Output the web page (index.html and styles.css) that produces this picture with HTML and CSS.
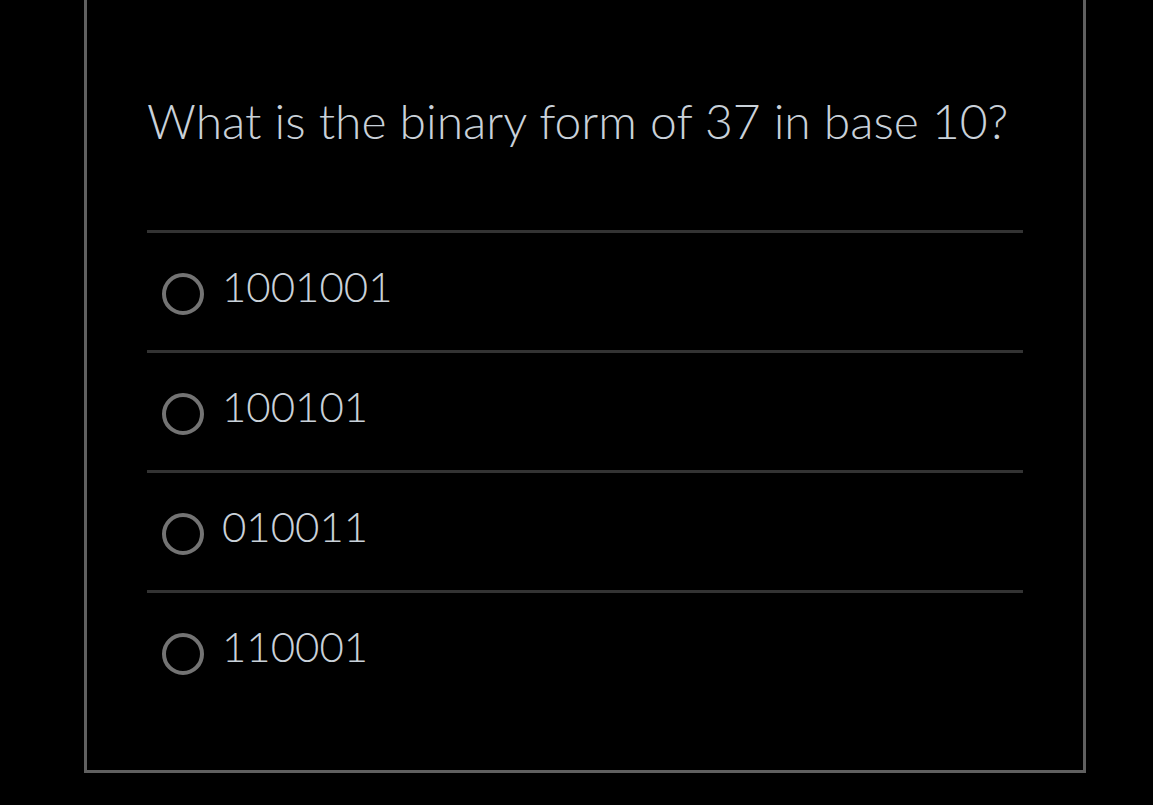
FILE: index.html
```html
<!DOCTYPE html>
<html lang="en">
<head>
<meta charset="utf-8">
<title>Quiz</title>
<link rel="stylesheet" href="styles.css">
</head>
<body>
<div class="card">
  <h1 class="question">What is the binary form of 37 in base 10?</h1>
  <ul class="options">
    <li class="option"><span class="radio"></span><span class="label">1001001</span></li>
    <li class="option"><span class="radio"></span><span class="label">100101</span></li>
    <li class="option"><span class="radio"></span><span class="label">010011</span></li>
    <li class="option"><span class="radio"></span><span class="label">110001</span></li>
  </ul>
</div>
</body>
</html>
```

FILE: styles.css
```css
html, body {
  margin: 0;
  padding: 0;
  background: #000;
}
body {
  font-family: Lato, "Noto Sans", sans-serif;
  color: #c9d1d9;
}
.card {
  margin-left: 84px;
  width: 876px;
  border: 3px solid #606060;
  border-top: none;
  padding: 0 60px 60px 60px;
  box-sizing: content-box;
}
.question {
  margin: 0;
  padding-top: 92px;
  padding-bottom: 80px;
  font-size: 48px;
  font-weight: 300;
  line-height: 58px;
  padding-left: 0;
}
.options {
  list-style: none;
  margin: 0;
  padding: 0;
}
.option {
  display: flex;
  align-items: center;
  height: 117px;
  border-top: 3px solid #333;
  padding-left: 15px;
}
.radio {
  width: 34px;
  height: 34px;
  border: 4px solid #737373;
  border-radius: 50%;
  flex: none;
  margin-top: 4px;
}
.label {
  margin-left: 18px;
  font-size: 42px;
  font-weight: 300;
  line-height: 50px;
  margin-bottom: 12px;
}
```
